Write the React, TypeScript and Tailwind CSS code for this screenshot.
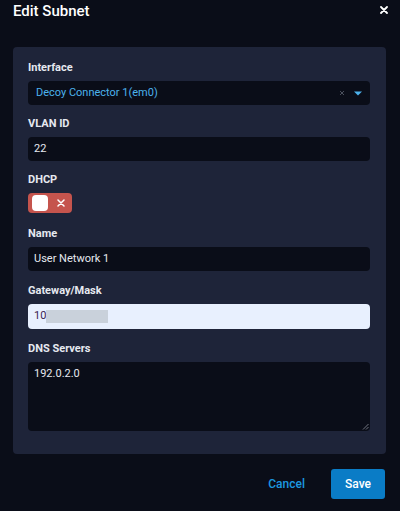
import React from "react";

function Label({ children }: { children: React.ReactNode }) {
  return (
    <div className="text-[11px] leading-[14px] font-bold text-[#e6e9f0] mb-[6px]">{children}</div>
  );
}

export default function App() {
  return (
    <div
      className="w-[400px] h-[511px] bg-[#0a0d18] flex flex-col overflow-hidden"
      style={{ fontFamily: "Roboto, 'Liberation Sans', sans-serif" }}
    >
      <div className="flex items-center justify-between h-[20px] pl-[13px] pr-[12px] mt-[1px]">
        <div className="text-[15px] font-medium text-white leading-[20px]">Edit Subnet</div>
        <svg width="8" height="8" viewBox="0 0 8 8" className="mb-[2px]">
          <path d="M1 1L7 7M7 1L1 7" stroke="#fff" strokeWidth="1.8" strokeLinecap="round" />
        </svg>
      </div>

      <div className="mt-[26px] mx-[13px] w-[373px] h-[407px] bg-[#1e2439] rounded-[4px] pt-[14px] pl-[15px] pr-[16px] flex flex-col">
        <div>
          <Label>Interface</Label>
          <div className="h-[24px] bg-[#0a0d18] rounded-[4px] flex items-center pl-[8px] pr-[8px]">
            <span className="flex-1 text-[11px] text-[#4cb2ec]">Decoy Connector 1(em0)</span>
            <svg width="6" height="6" viewBox="0 0 6 6" className="mr-[9px]">
              <path d="M1 1L5 5M5 1L1 5" stroke="#4a4f5c" strokeWidth="1" />
            </svg>
            <svg width="8" height="5" viewBox="0 0 8 5">
              <path d="M0 0.5H8L4 4.5Z" fill="#4cb2ec" />
            </svg>
          </div>
        </div>

        <div className="mt-[12px]">
          <Label>VLAN ID</Label>
          <div className="h-[24px] bg-[#0a0d18] rounded-[4px] flex items-center pl-[6px] text-[11px] text-[#e6e9f0]">
            22
          </div>
        </div>

        <div className="mt-[12px]">
          <Label>DHCP</Label>
          <div className="w-[44px] h-[20px] bg-[#c5544d] rounded-[4px] flex items-center pl-[4px]">
            <div className="w-[16px] h-[16px] bg-white rounded-[4px]" />
            <svg width="8" height="8" viewBox="0 0 8 8" className="ml-[9px]">
              <path d="M1 1L7 7M7 1L1 7" stroke="#fff" strokeWidth="1.5" strokeLinecap="round" />
            </svg>
          </div>
        </div>

        <div className="mt-[14px]">
          <Label>Name</Label>
          <div className="h-[24px] bg-[#0a0d18] rounded-[4px] flex items-center pl-[6px] text-[11px] text-[#e6e9f0]">
            User Network 1
          </div>
        </div>

        <div className="mt-[13px]">
          <Label>Gateway/Mask</Label>
          <div className="h-[25px] bg-[#e8f0fe] rounded-[4px] flex items-center pl-[6px] text-[11px] text-[#3a2550]">
            <span>10</span>
            <div className="w-[62px] h-[13px] bg-[#c9d1db]" />
          </div>
        </div>

        <div className="mt-[13px]">
          <Label>DNS Servers</Label>
          <div className="relative h-[69px] bg-[#0a0d18] rounded-[4px] pl-[6px] pt-[5px] text-[11px] leading-[14px] text-[#e6e9f0]">
            192.0.2.0
            <svg width="7" height="7" viewBox="0 0 7 7" className="absolute right-[1px] bottom-[1px]">
              <path d="M6.5 1L1 6.5M6.5 4L4 6.5" stroke="#8a8f99" strokeWidth="0.8" />
            </svg>
          </div>
        </div>
      </div>

      <div className="flex items-center justify-end pr-[15px] mt-[15px] gap-[26px]">
        <span className="text-[12px] font-medium text-[#1c98e0]">Cancel</span>
        <div className="w-[54px] h-[30px] bg-[#0a7cc6] rounded-[3px] flex items-center justify-center text-[12px] font-medium text-white">
          Save
        </div>
      </div>
    </div>
  );
}
